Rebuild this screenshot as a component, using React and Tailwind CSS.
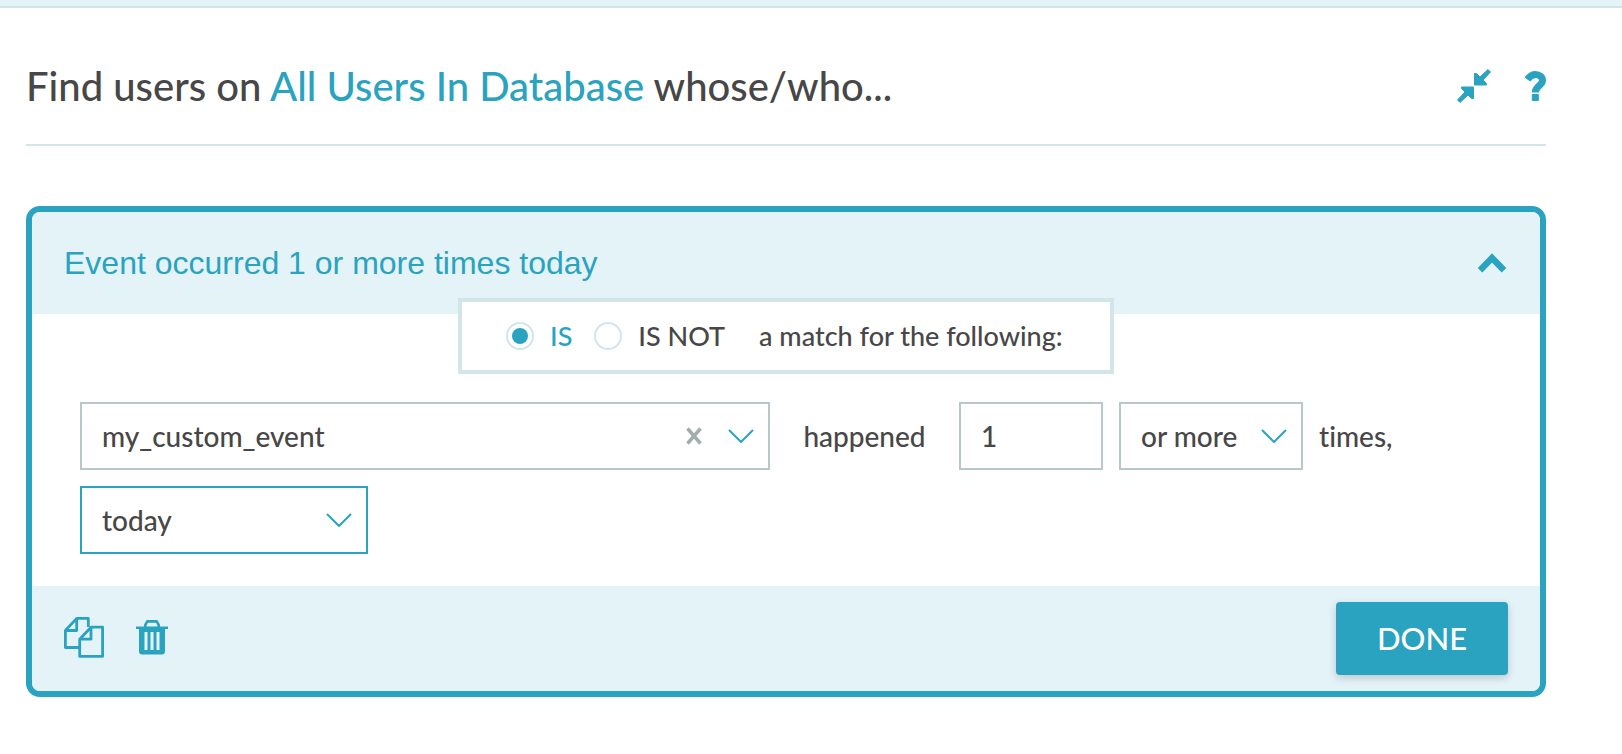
import React, { useState } from "react";

const CompressIcon = () => (
  <svg width="34" height="34" viewBox="0 0 34 34" fill="currentColor" stroke="currentColor" strokeWidth="1" strokeLinejoin="round">
    <path d="M17.5 4.5h2l3.5 3.5 8-7.5 2.5 2.5-7.5 8 3.5 3.5v1.5h-12z" />
    <path d="M16.5 29.5h-2l-3.5-3.5-8 7.5-2.5-2.5 7.5-8-3.5-3.5v-1.5h12z" />
  </svg>
);

const HelpIcon = () => (
  <svg width="21" height="30" viewBox="0 0 21 30" fill="none" stroke="currentColor">
    <path d="M2.3 8.5C5 4.8 7.5 3.5 10.5 3.5c4 0 7 2.5 7 6 0 5-7.2 5.5-7.2 12" strokeWidth="7" />
    <rect x="7.3" y="23.5" width="6" height="6" fill="currentColor" strokeWidth="1" strokeLinejoin="round" />
  </svg>
);

const CollapseIcon = () => (
  <svg width="30" height="20" viewBox="0 0 30 20" fill="none" stroke="currentColor">
    <path d="M2 17.3L14 5l12 12.3" strokeWidth="6.5" />
  </svg>
);

const CopyIcon = () => (
  <svg width="40" height="41" viewBox="0 0 40 41" fill="none" stroke="currentColor" strokeWidth="2.8" strokeLinejoin="round">
    <path d="M15 30.5H1.4v-17L12.7 1.4h11.6V10M12.7 2v11.5H1.5" />
    <path d="M15.7 22.2l11.3-12h11.6v29.2H15.7zM27 10.5v11.7H16" />
  </svg>
);

const TrashIcon = () => (
  <svg width="32" height="35" viewBox="0 0 32 35" fill="none" stroke="currentColor">
    <path d="M0 7.7h32" strokeWidth="2.6" />
    <path d="M9.3 7V5l2-3.6h9.4l2 3.6v2" strokeWidth="2.6" strokeLinejoin="round" />
    <path
      fill="currentColor"
      stroke="none"
      fillRule="evenodd"
      d="M3 8h26v23.5a3 3 0 0 1-3 3H6a3 3 0 0 1-3-3zM8.5 12v18h3V12zM14.5 12v18h3V12zM20.5 12v18h3V12z"
    />
  </svg>
);

const ClearIcon = () => (
  <svg width="16" height="18" viewBox="0 0 16 18" fill="none" stroke="currentColor" strokeWidth="3.5">
    <path d="M1.5 1.5l13 15M14.5 1.5l-13 15" />
  </svg>
);

const SelectField = ({ label, options, className, onClear }) => (
  <div className={`relative ${className}`}>
    <select
      aria-label={label}
      className="block h-17 w-full appearance-none border-2 border-inherit bg-white pl-5 pr-12 text-[#474747] outline-none"
    >
      {options.map((option) => (
        <option key={option}>{option}</option>
      ))}
    </select>
    {onClear && (
      <button
        type="button"
        aria-label="Clear event"
        onClick={onClear}
        className="absolute inset-y-0 right-17 text-[#a3adae]"
      >
        <ClearIcon />
      </button>
    )}
    <span className="pointer-events-none absolute inset-y-0 right-4 flex items-center text-[#2aa3c1]">
      <svg width="26" height="14" viewBox="0 0 26 14" fill="none" stroke="currentColor" strokeWidth="2">
        <path d="M1 1l12 12L25 1" />
      </svg>
    </span>
  </div>
);

const MatchOption = ({ id, label, checked, onChange }) => (
  <div className="flex items-center gap-4">
    <input
      id={id}
      type="radio"
      name="match"
      checked={checked}
      onChange={onChange}
      className="size-7 appearance-none rounded-full border-2 border-[#d2e6ea] bg-white bg-clip-content p-1 checked:bg-[#2aa3c1]"
    />
    <label htmlFor={id} className={checked ? "text-[#2aa3c1]" : "text-[#474747]"}>
      {label}
    </label>
  </div>
);

const App = () => {
  const [match, setMatch] = useState("is");
  const [count, setCount] = useState("1");

  return (
    <div className="min-h-screen bg-white font-[Lato,sans-serif] text-[28px] font-medium leading-8 text-[#474747] [font-variant-ligatures:none]">
      <div className="h-2 border-b-2 border-[#d2e6ea] bg-[#e4f3f8]" />

      <main className="pb-14 pl-[26px] pr-19">
        <header className="flex h-[138px] items-center justify-between border-b-2 border-[#d2e6ea] pt-5">
          <h1 className="text-[40px] leading-12">
            Find users on{" "}
            <a href="#users" className="text-[#2aa3c1]">
              All Users In Database
            </a>{" "}
            whose/who...
          </h1>
          <div className="flex items-center gap-[34px] text-[#2aa3c1]">
            <button type="button" aria-label="Collapse">
              <CompressIcon />
            </button>
            <button type="button" aria-label="Help">
              <HelpIcon />
            </button>
          </div>
        </header>

        <section className="mt-15 overflow-hidden rounded-[14px] border-6 border-[#2aa3c1]">
          <div className="flex h-[102px] items-center justify-between bg-[#e4f3f8] px-8 text-[#2aa3c1]">
            <h2 className="font-[Liberation_Sans,sans-serif] text-[32px] leading-10">
              Event occurred 1 or more times today
            </h2>
            <button type="button" aria-label="Collapse event">
              <CollapseIcon />
            </button>
          </div>

          <div className="-mt-4 flex justify-center">
            <fieldset className="flex h-19 w-[656px] items-center gap-[22px] border-4 border-[#d2e6ea] bg-white px-11 text-[27px]">
              <MatchOption id="is" label="IS" checked={match === "is"} onChange={() => setMatch("is")} />
              <MatchOption id="is-not" label="IS NOT" checked={match === "is-not"} onChange={() => setMatch("is-not")} />
              <span className="whitespace-nowrap pl-3">a match for the following:</span>
            </fieldset>
          </div>

          <div className="flex flex-wrap items-center gap-4 px-12 pb-8 pt-7">
            <SelectField
              label="Event"
              options={["my_custom_event"]}
              className="w-[690px] border-[#b8c7c9]"
              onClear={() => {}}
            />
            <label htmlFor="count" className="w-[157px] text-center">
              happened
            </label>
            <input
              id="count"
              type="text"
              value={count}
              onChange={(e) => setCount(e.target.value)}
              className="h-17 w-36 border-2 border-[#b8c7c9] px-5 outline-none"
            />
            <SelectField label="Comparison" options={["or more", "or less"]} className="w-46 border-[#b8c7c9]" />
            <span>times,</span>
            <SelectField label="Period" options={["today", "yesterday"]} className="w-72 border-[#2aa3c1]" />
          </div>

          <footer className="flex items-center justify-between bg-[#e4f3f8] px-8 py-4 text-[#2aa3c1]">
            <div className="flex items-center gap-8 pb-0.5">
              <button type="button" aria-label="Duplicate">
                <CopyIcon />
              </button>
              <button type="button" aria-label="Delete">
                <TrashIcon />
              </button>
            </div>
            <button
              type="button"
              className="h-[73px] w-43 rounded bg-[#2aa3c1] pb-0.5 text-[31px] text-white shadow-[0_3px_8px_rgba(0,0,0,0.18)]"
            >
              DONE
            </button>
          </footer>
        </section>
      </main>
    </div>
  );
};

export default App;
